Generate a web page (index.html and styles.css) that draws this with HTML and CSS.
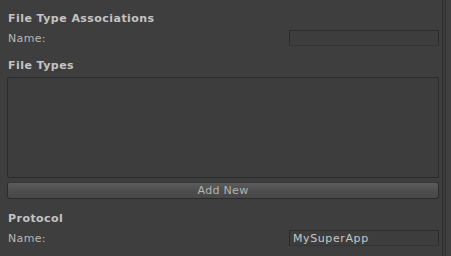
FILE: index.html
```html
<!DOCTYPE html>
<html lang="en">
<head>
    <meta charset="UTF-8">
    <title>Player Settings</title>
    <link rel="stylesheet" href="styles.css">
</head>
<body>
    <div class="window">
        <div class="inspector">
            <h2 class="section-title first">File Type Associations</h2>
            <div class="field-row">
                <label for="assoc-name">Name:</label>
                <input type="text" id="assoc-name" value="">
            </div>

            <h2 class="section-title">File Types</h2>
            <div class="list-box"></div>
            <button type="button" class="add-button">Add New</button>

            <h2 class="section-title">Protocol</h2>
            <div class="field-row">
                <label for="protocol-name">Name:</label>
                <input type="text" id="protocol-name" value="MySuperApp">
            </div>
        </div>
        <div class="scrollbar"><div class="scroll-track"></div></div>
    </div>
</body>
</html>
```

FILE: styles.css
```css
body {
    margin: 0;
    background-color: #3e3e3e;
    font-family: "DejaVu Sans", sans-serif;
    font-size: 11px;
    color: #b8b8b8;
    height: 256px;
    overflow: hidden;
}
.window {
    display: flex;
    height: 256px;
}
.inspector {
    flex: 1;
    padding: 0 3px 0 7px;
}
.section-title {
    font-size: 11px;
    font-weight: bold;
    line-height: 16px;
    letter-spacing: 0.45px;
    color: #c4c4c4;
    margin: 12px 0 -2px 1px;
}
.section-title.first {
    margin-top: 11px;
}
.field-row {
    display: flex;
    justify-content: space-between;
    align-items: center;
    margin-top: 5px;
    height: 16px;
}
.field-row label {
    margin-left: 1px;
    line-height: 16px;
    letter-spacing: 0.35px;
    position: relative;
    top: 1px;
}
.field-row input {
    box-sizing: border-box;
    width: 150px;
    height: 16px;
    padding: 0 2px 0 3px;
    font-family: "DejaVu Sans", sans-serif;
    font-size: 11px;
    letter-spacing: 0.6px;
    color: #c8c8c8;
    background-color: #3d3d3d;
    border: 1px solid #2a2a2a;
    border-bottom-color: #353535;
    border-radius: 1px;
    outline: none;
}
.list-box {
    box-sizing: border-box;
    margin-top: 5px;
    height: 101px;
    border: 1px solid #2b2b2b;
    border-radius: 2px;
    background-color: #3d3d3d;
}
.add-button {
    display: block;
    box-sizing: border-box;
    width: 100%;
    height: 17px;
    margin-top: 4px;
    padding: 0;
    font-family: "DejaVu Sans", sans-serif;
    font-size: 11px;
    line-height: 15px;
    letter-spacing: 0.3px;
    color: #b4b4b4;
    background: linear-gradient(#5c5c5c, #4c4c4c 60%, #484848);
    border: 1px solid #2c2c2c;
    border-top-color: #363636;
    border-radius: 3px;
}
.scrollbar {
    width: 8px;
    border-left: 1px solid #2c2c2c;
    background-color: #3b3b3b;
}
.scroll-track {
    margin-left: 2px;
    height: 100%;
    border-left: 1px solid #303030;
    background-color: #404040;
}
```
